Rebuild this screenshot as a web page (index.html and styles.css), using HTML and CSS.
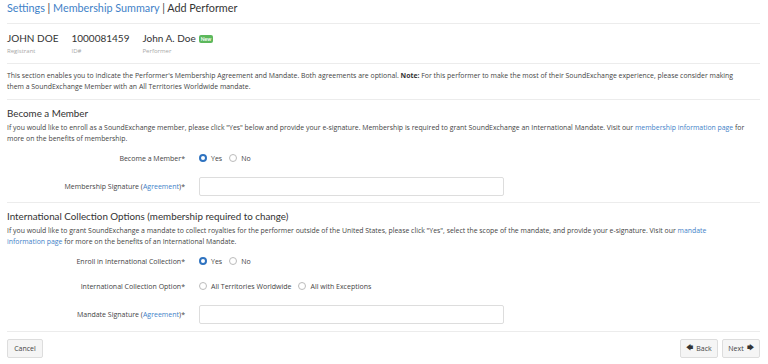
FILE: index.html
```html
<!DOCTYPE html>
<html>
<head>
<meta charset="utf-8">
<link rel="stylesheet" href="styles.css">
</head>
<body>
<div class="page">
  <div class="crumbs"><a class="lnk">Settings</a> | <a class="lnk">Membership Summary</a> | <span class="cur">Add Performer</span></div>
  <hr class="rule r1">
  <div class="ids">
    <div class="id"><div class="big">JOHN DOE</div><div class="sub">Registrant</div></div>
    <div class="id"><div class="big">1000081459</div><div class="sub">ID#</div></div>
    <div class="id"><div class="big">John A. Doe <span class="badge">New</span></div><div class="sub">Performer</div></div>
  </div>
  <hr class="rule r2">
  <p class="txt intro">This section enables you to indicate the Performer's Membership Agreement and Mandate. Both agreements are optional. <b>Note:</b> For this performer to make the most of their SoundExchange experience, please consider making them a SoundExchange Member with an All Territories Worldwide mandate.</p>
  <hr class="rule r3">
  <h2 class="head">Become a Member</h2>
  <p class="txt">If you would like to enroll as a SoundExchange member, please click "Yes" below and provide your e-signature. Membership is required to grant SoundExchange an International Mandate. Visit our <a class="lnk">membership information page</a> for more on the benefits of membership.</p>
  <div class="row rrad first">
    <div class="lab">Become a Member*</div>
    <div class="opts"><span class="radio on"></span><span class="ol">Yes</span><span class="radio"></span><span class="ol">No</span></div>
  </div>
  <div class="row rin">
    <div class="lab">Membership Signature (<a class="lnk">Agreement</a>)*</div>
    <div class="input"></div>
  </div>
  <hr class="rule r4">
  <h2 class="head">International Collection Options (membership required to change)</h2>
  <p class="txt mand">If you would like to grant SoundExchange a mandate to collect royalties for the performer outside of the United States, please click "Yes", select the scope of the mandate, and provide your e-signature. Visit our <a class="lnk">mandate information page</a> for more on the benefits of an International Mandate.</p>
  <div class="row rrad first">
    <div class="lab">Enroll in International Collection*</div>
    <div class="opts"><span class="radio on"></span><span class="ol">Yes</span><span class="radio"></span><span class="ol">No</span></div>
  </div>
  <div class="row rrad second">
    <div class="lab">International Collection Option*</div>
    <div class="opts"><span class="radio"></span><span class="ol">All Territories Worldwide</span><span class="radio"></span><span class="ol">All with Exceptions</span></div>
  </div>
  <div class="row rin">
    <div class="lab">Mandate Signature (<a class="lnk">Agreement</a>)*</div>
    <div class="input"></div>
  </div>
  <hr class="rule r5">
  <div class="actions">
    <span class="btn bc">Cancel</span>
    <div class="nav">
      <span class="btn bn"><span class="arr">&#129092;</span> Back</span>
      <span class="btn bn">Next <span class="arr">&#129094;</span></span>
    </div>
  </div>
</div>
</body>
</html>
```
FILE: styles.css
```css
html, body { margin: 0; padding: 0; background: #fff; }
body { font-family: "Open Sans", "Noto Sans", sans-serif; color: #333; }
.page { padding: 0 7px 0 7px; }
.lnk { color: #3f82c8; text-decoration: none; }
.crumbs { font-family: Lato, "Open Sans", sans-serif; font-size: 10.8px; line-height: 14px; padding-top: 1px; color: #444; }
.crumbs .cur { color: #333; }
.rule { border: 0; border-top: 1px solid #ececec; margin: 0 1px 0 0; }
.r1 { margin-top: 8px; }
.ids { display: flex; gap: 13px; padding-top: 8px; height: 31px; }
.big { font-family: Lato, "Open Sans", sans-serif; font-size: 10px; line-height: 13px; color: #333; display: flex; align-items: center; gap: 3px; }
.sub { font-size: 6px; line-height: 8px; color: #a8a8a8; margin-top: 2px; }
.badge { background: #5cb85c; color: #fff; font-size: 5px; font-weight: 700; padding: 1px 2px; border-radius: 2px; line-height: 6px; }
.txt { font-size: 6.9px; line-height: 11px; margin: 0; color: #444; }
.intro { padding: 6px 0 7px; max-width: 735px; }
.mand { max-width: 720px; }
.txt b { color: #333; }
.head { font-family: Lato, "Open Sans", sans-serif; font-weight: 400; font-size: 9.8px; line-height: 12px; margin: 0; padding: 7px 0 3px; color: #333; }
.row { display: flex; align-items: center; }
.lab { width: 178px; text-align: right; font-size: 7px; color: #444; padding-right: 14px; flex: none; }
.rrad { height: 14px; }
.rrad.first { margin-top: 7px; }
.rrad.second { margin-top: 11px; }
.rin { margin-top: 12px; height: 19px; }
.opts { display: flex; align-items: center; font-size: 7px; color: #444; }
.radio { width: 8px; height: 8px; border: 1px solid #bbb; border-radius: 50%; box-sizing: border-box; background: #fff; margin-right: 4px; }
.radio.on { border: 2.5px solid #2f73c0; }
.ol { margin-right: 7px; }
.input { width: 305px; height: 19px; border: 1px solid #ddd; border-radius: 2px; box-sizing: border-box; }
.r4 { margin-top: 6px; }
.r5 { margin-top: 7px; }
.actions { display: flex; justify-content: space-between; padding-top: 7px; padding-right: 1px; }
.nav { display: flex; gap: 4px; }
.btn { display: inline-flex; align-items: center; justify-content: center; height: 19px; box-sizing: border-box; border: 1px solid #ddd; border-radius: 2px; background: #f5f5f5; font-size: 7px; color: #444; gap: 3px; }
.bc { width: 36px; }
.bn { width: 38px; }
.arr { font-family: "DejaVu Sans", sans-serif; font-size: 7px; color: #333; }
```
